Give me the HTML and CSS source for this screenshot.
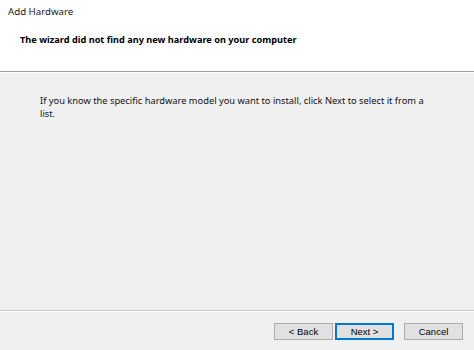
FILE: index.html
```html
<!DOCTYPE html>
<html>
<head>
    <title>Add Hardware</title>
    <meta charset="utf-8">
    <link rel="stylesheet" href="styles.css">
</head>
<body>
    <div class="wizard">
        <div class="header">
            <div class="title">Add Hardware</div>
            <h1>The wizard did not find any new hardware on your computer</h1>
        </div>

        <div class="content">
            <p>If you know the specific hardware model you want to install, click Next to select it from a list.</p>
        </div>

        <div class="footer">
            <div class="buttons">
                <button class="btn">&lt; Back</button>
                <button class="btn default">Next &gt;</button>
                <button class="btn cancel">Cancel</button>
            </div>
        </div>
    </div>
</body>
</html>
```

FILE: styles.css
```css
body {
    font-family: 'Noto Sans', 'Open Sans', sans-serif;
    margin: 0;
    background: #f0f0f0;
    color: #000;
}
.wizard {
    width: 474px;
    height: 350px;
    display: flex;
    flex-direction: column;
}
.header {
    background: white;
    height: 72px;
    border-bottom: 1px solid #a0a0a0;
    box-shadow: 0 1px 0 #fff;
    box-sizing: border-box;
    padding: 5px 0 0 8px;
}
.title {
    font-size: 9.7px;
    color: #1a1a1a;
    line-height: 14px;
}
.header h1 {
    font-size: 9.2px;
    font-weight: bold;
    margin: 14px 0 0 12px;
    line-height: 14px;
}
.content {
    flex: 1;
    padding: 21px 40px 0 40px;
    margin-top: 1px;
}
.content p {
    margin: 0;
    font-size: 9.3px;
    line-height: 13px;
    width: 400px;
    color: #111;
}
.footer {
    border-top: 1px solid #c8c8c8;
    box-shadow: inset 0 1px 0 #fff;
    height: 40px;
    box-sizing: border-box;
    padding: 12px 11px 0 0;
}
.buttons {
    display: flex;
    justify-content: flex-end;
    gap: 2px;
}
.btn {
    font-family: 'Liberation Sans', Arial, sans-serif;
    font-size: 9.5px;
    width: 59px;
    height: 17px;
    padding: 0;
    background: #e1e1e1;
    border: 1px solid #adadad;
    color: #000;
}
.btn.default {
    border: 2px solid #0078d7;
}
.btn.cancel {
    margin-left: 8px;
}
```
